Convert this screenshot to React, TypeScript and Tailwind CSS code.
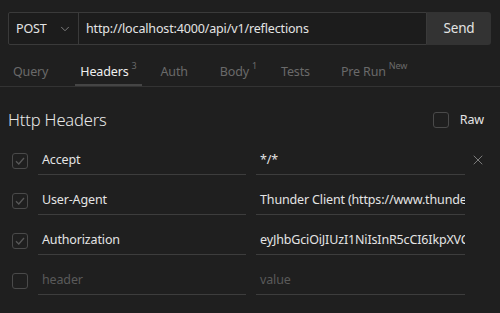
import { ChevronDown, X } from "lucide-react";

const tabs = [
  { label: "Query", sup: "", gap: "" },
  { label: "Headers", sup: "3", active: true, gap: "ml-[22px]" },
  { label: "Auth", sup: "", gap: "ml-[14px]" },
  { label: "Body", sup: "1", gap: "ml-[22px]" },
  { label: "Tests", sup: "", gap: "ml-[14px]" },
  { label: "Pre Run", sup: "New", gap: "ml-[21px]" },
];

const rows = [
  { name: "Accept", value: "*/*", checked: true, remove: true },
  { name: "User-Agent", value: "Thunder Client (https://www.thunderclient.com)", checked: true },
  { name: "Authorization", value: "eyJhbGciOiJIUzI1NiIsInR5cCI6IkpXVCJ9", checked: true },
  { name: "", value: "", checked: false },
];

function Checkbox({ checked }: { checked: boolean }) {
  return (
    <div className="flex h-[16px] w-[16px] shrink-0 items-center justify-center rounded-[3px] border border-[#4a4a4a]">
      {checked && (
        <svg width="12" height="12" viewBox="0 0 12 12" fill="none">
          <path d="M2 6.3 4.8 9 10 3" stroke="#585858" strokeWidth="1.3" />
        </svg>
      )}
    </div>
  );
}

export default function App() {
  return (
    <div
      className="h-[313px] w-[500px] overflow-hidden bg-[#1f1f1f] text-[12.5px] tracking-[-0.15px] text-[#e4e4e4]"
      style={{ fontFamily: '"Noto Sans", "Open Sans", sans-serif' }}
    >
      {/* URL bar */}
      <div className="ml-[8px] mr-[9px] mt-[12px] flex h-[33px]">
        <div className="flex flex-1 rounded-l-[2px] border border-[#3a3a3a] bg-[#1c1c1c]">
          <div className="flex w-[70px] items-center justify-between border-r border-[#3a3a3a] pl-[7px] pr-[6px] pt-[1px]">
            <span>POST</span>
            <ChevronDown className="h-[14px] w-[14px] text-[#8a8a8a]" strokeWidth={1.5} />
          </div>
          <div className="flex items-center pl-[7px] pt-[1px]">http://localhost:4000/api/v1/reflections</div>
        </div>
        <button className="w-[64px] rounded-r-[3px] bg-[#333333] text-[13.5px] text-[#e4e4e4]">Send</button>
      </div>

      {/* Tabs */}
      <div className="mt-[12px] flex h-[30px] border-b border-[#333333] pl-[8px]">
        {tabs.map((t) => (
          <div
            key={t.label}
            className={
              "flex items-center border-b-[2px] px-[5px] pt-[3px] " +
              t.gap +
              " " +
              (t.active ? "border-[#454545] text-[#f0f0f0]" : "border-transparent text-[#6a6a6a]")
            }
          >
            <span>{t.label}</span>
            {t.sup && <span className="ml-[3px] -mt-[12px] text-[9px] text-[#6a6a6a]">{t.sup}</span>}
          </div>
        ))}
      </div>

      {/* Heading */}
      <div className="flex h-[48px] items-center justify-between pl-[8px] pr-[16px] pt-[18px]">
        <span className="text-[16.5px] font-light text-[#e8e8e8]">Http Headers</span>
        <div className="flex items-center gap-[11px]">
          <Checkbox checked={false} />
          <span>Raw</span>
        </div>
      </div>

      {/* Header rows */}
      <div>
        {rows.map((r, i) => (
          <div key={i} className="flex h-[40px] items-center pt-[10px]">
            <div className="ml-[12px] mt-[1px]">
              <Checkbox checked={r.checked} />
            </div>
            <div className="ml-[10px] flex h-[30px] w-[208px] items-center overflow-hidden whitespace-nowrap border-b border-[#3d3d3d] pl-[4px] pt-[2px]">
              {r.name ? <span>{r.name}</span> : <span className="text-[#5a5a5a]">header</span>}
            </div>
            <div className="ml-[10px] flex h-[30px] w-[209px] items-center overflow-hidden whitespace-nowrap border-b border-[#3d3d3d] pl-[4px] pt-[2px]">
              {r.value ? <span>{r.value}</span> : <span className="text-[#5a5a5a]">value</span>}
            </div>
            {r.remove && (
              <div className="ml-[5px] flex w-[16px] items-center justify-center">
                <X className="h-[16px] w-[16px] text-[#8a8a8a]" strokeWidth={1.3} />
              </div>
            )}
          </div>
        ))}
      </div>
    </div>
  );
}
